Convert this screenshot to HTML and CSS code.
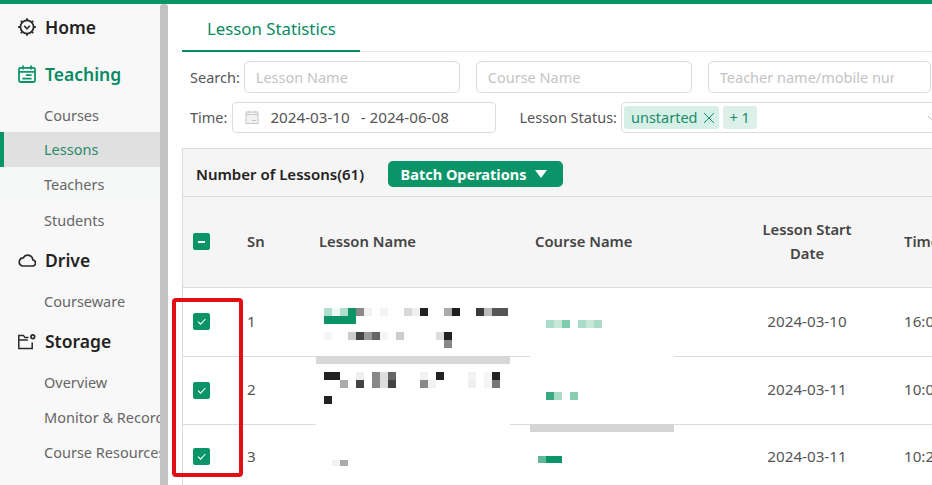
FILE: index.html
```html
<!DOCTYPE html>
<html lang="en">
<head>
<meta charset="utf-8">
<title>Lesson Statistics</title>
<link rel="stylesheet" href="styles.css">
</head>
<body>
<div class="topbar"></div>
<div class="app">
  <aside class="sidebar">
    <nav class="nav">
      <a class="group group-home">
        <svg class="icon" viewBox="0 0 18 18" fill="none" stroke="#2b2b2b" stroke-width="1.8"><circle cx="9" cy="9" r="6.6"/><path d="M9 .2v2M9 15.8v2M.2 9h2M15.8 9h2M2.8 2.8l1.4 1.4M13.8 13.8l1.4 1.4M15.2 2.8l-1.4 1.4M4.2 13.8l-1.4 1.4"/><path d="M6.2 7.8 9 10.8l2.8-3" stroke-width="1.6"/></svg>
        Home
      </a>
      <a class="group group-active group-teaching">
        <svg class="icon" viewBox="0 0 18 18" fill="none" stroke="#0a9468" stroke-width="1.8"><rect x="1" y="2.8" width="16" height="14.2" rx="1.4"/><path d="M5 .4v4M13 .4v4M1 6.8h16M8 10.2h5.6M4.4 13.6h9.2"/></svg>
        Teaching
      </a>
      <a class="item">Courses</a>
      <a class="item item-active">Lessons</a>
      <a class="item item-hover">Teachers</a>
      <a class="item">Students</a>
      <a class="group group-drive">
        <svg class="icon" viewBox="0 0 18 18" fill="none" stroke="#2b2b2b" stroke-width="1.7"><path d="M4.2 15h10a3 3 0 0 0 .6-6 5 5 0 0 0-9.4-2.2A4.2 4.2 0 0 0 4.2 15Z" stroke-linejoin="round"/></svg>
        Drive
      </a>
      <a class="item">Courseware</a>
      <a class="group group-storage">
        <svg class="icon" viewBox="0 0 18 18" fill="none" stroke="#2b2b2b" stroke-width="1.5"><path d="M10.5 5.6H7L5.4 3.4H.8v13h13.4v-6M.8 8h9"/><circle cx="14.8" cy="4.8" r="2.7" fill="#2b2b2b" stroke="none"/><circle cx="14.8" cy="4.8" r="1" fill="#f8f8f8" stroke="none"/></svg>
        Storage
      </a>
      <a class="item">Overview</a>
      <a class="item">Monitor &amp; Recording</a>
      <a class="item">Course Resources</a>
    </nav>
    <div class="scrollbar"></div>
  </aside>
  <main class="main">
    <div class="tabs"><div class="tab">Lesson Statistics</div></div>
    <div class="filters">
      <div class="filter-row">
        <label class="label">Search:</label>
        <input class="input input-lesson" placeholder="Lesson Name">
        <input class="input input-course" placeholder="Course Name">
        <input class="input input-teacher" placeholder="Teacher name/mobile number">
      </div>
      <div class="filter-row filter-row-2">
        <label class="label">Time:</label>
        <div class="range">
          <svg class="range-icon" viewBox="0 0 14 14" fill="none" stroke="#c8c8c8" stroke-width="1"><rect x="1" y="2" width="12" height="11.5" fill="#f2f2f2"/><path d="M4 .5v2.5M10 .5v2.5M1 4.5h12M7 10.5h4"/></svg>
          <span>2024-03-10</span><span class="range-sep">- 2024-06-08</span>
        </div>
        <label class="label label-status">Lesson Status:</label>
        <div class="select">
          <span class="tag">unstarted
            <svg class="tag-x" viewBox="0 0 12 12" fill="none" stroke="#0a9468" stroke-width="1"><path d="M1 1l10 10M11 1 1 11"/></svg>
          </span>
          <span class="tag tag-more">+ 1</span>
          <svg class="select-arrow" viewBox="0 0 10 6" fill="none" stroke="#c0c0c0" stroke-width="1"><path d="M1 1l4 4 4-4"/></svg>
        </div>
      </div>
    </div>
    <section class="panel">
      <div class="toolbar">
        <strong class="count">Number of Lessons(61)</strong>
        <button class="batch">Batch Operations <span class="caret"></span></button>
      </div>
      <table class="table">
        <colgroup><col class="c-check"><col class="c-sn"><col class="c-lesson"><col class="c-course"><col class="c-date"><col class="c-time"></colgroup>
        <thead>
          <tr>
            <th><span class="check check-head"><span class="minus"></span></span></th>
            <th>Sn</th>
            <th>Lesson Name</th>
            <th>Course Name</th>
            <th class="center">Lesson Start<br>Date</th>
            <th class="last">Time</th>
          </tr>
        </thead>
        <tbody>
          <tr class="row1">
            <td><span class="check"><svg viewBox="0 0 17 17" fill="none" stroke="#fff" stroke-width="1.1"><path d="M5 8.6l2.6 2.6L12.4 6"/></svg></span></td>
            <td>1</td><td></td><td></td><td class="center">2024-03-10</td><td class="last">16:00</td>
          </tr>
          <tr class="row2">
            <td><span class="check"><svg viewBox="0 0 17 17" fill="none" stroke="#fff" stroke-width="1.1"><path d="M5 8.6l2.6 2.6L12.4 6"/></svg></span></td>
            <td>2</td><td></td><td></td><td class="center">2024-03-11</td><td class="last">10:00</td>
          </tr>
          <tr class="row3">
            <td><span class="check"><svg viewBox="0 0 17 17" fill="none" stroke="#fff" stroke-width="1.1"><path d="M5 8.6l2.6 2.6L12.4 6"/></svg></span></td>
            <td>3</td><td></td><td></td><td class="center">2024-03-11</td><td class="last">10:20</td>
          </tr>
        </tbody>
      </table>
      <svg class="redact" width="750" height="337" viewBox="182 148 750 337" shape-rendering="crispEdges">
        <g fill="#fff"><rect x="316" y="288" width="194" height="197"/><rect x="510" y="289" width="20" height="66"/><rect x="530" y="288" width="144" height="197"/></g>
        <rect x="316" y="356" width="194" height="8" fill="#d8d8d8"/>
        <rect x="530" y="424" width="144" height="8" fill="#d4d4d4"/>
        <rect x="510" y="356" width="20" height="1" fill="#dcdcdc"/>
        <rect x="510" y="424" width="20" height="1" fill="#dcdcdc"/>
        <g>
          <rect x="324" y="308" width="8" height="8" fill="#b0e0cc"/><rect x="332" y="308" width="8" height="8" fill="#eef8f4"/><rect x="340" y="308" width="8" height="8" fill="#b0dfcc"/><rect x="348" y="308" width="8" height="8" fill="#0a9468"/><rect x="356" y="308" width="8" height="8" fill="#888"/><rect x="364" y="308" width="8" height="8" fill="#f2f2f2"/><rect x="380" y="308" width="8" height="8" fill="#f4f4f4"/><rect x="404" y="308" width="8" height="8" fill="#d8d8d8"/><rect x="412" y="308" width="8" height="8" fill="#eee"/><rect x="420" y="308" width="8" height="8" fill="#222"/><rect x="444" y="308" width="8" height="8" fill="#aaa"/><rect x="452" y="308" width="8" height="8" fill="#1e1e1e"/><rect x="476" y="308" width="8" height="8" fill="#3a3a3a"/><rect x="484" y="308" width="8" height="8" fill="#bbb"/><rect x="492" y="308" width="16" height="8" fill="#555"/>
          <rect x="324" y="316" width="32" height="8" fill="#0a9468"/>
          <rect x="324" y="332" width="8" height="8" fill="#f5f5f5"/><rect x="348" y="332" width="8" height="8" fill="#ccc"/><rect x="356" y="332" width="8" height="8" fill="#444"/><rect x="364" y="332" width="8" height="8" fill="#999"/><rect x="372" y="332" width="8" height="8" fill="#666"/><rect x="380" y="332" width="8" height="8" fill="#f5f5f5"/><rect x="396" y="332" width="8" height="8" fill="#ccc"/><rect x="436" y="332" width="8" height="8" fill="#ddd"/><rect x="444" y="332" width="8" height="8" fill="#222"/>
          <rect x="444" y="340" width="8" height="8" fill="#888"/>
          <rect x="324" y="372" width="16" height="8" fill="#222"/><rect x="356" y="372" width="8" height="8" fill="#eee"/><rect x="372" y="372" width="8" height="8" fill="#888"/><rect x="380" y="372" width="8" height="8" fill="#ddd"/><rect x="388" y="372" width="8" height="8" fill="#666"/><rect x="420" y="372" width="8" height="8" fill="#f2f2f2"/><rect x="436" y="372" width="8" height="8" fill="#222"/><rect x="468" y="372" width="8" height="8" fill="#f2f2f2"/><rect x="484" y="372" width="8" height="8" fill="#f5f5f5"/><rect x="492" y="372" width="8" height="8" fill="#222"/>
          <rect x="340" y="380" width="8" height="8" fill="#aaa"/><rect x="356" y="380" width="8" height="8" fill="#444"/><rect x="372" y="380" width="8" height="8" fill="#888"/><rect x="380" y="380" width="8" height="8" fill="#ddd"/><rect x="388" y="380" width="8" height="8" fill="#444"/><rect x="420" y="380" width="8" height="8" fill="#888"/><rect x="428" y="380" width="8" height="8" fill="#f2f2f2"/><rect x="468" y="380" width="8" height="8" fill="#eee"/><rect x="484" y="380" width="8" height="8" fill="#f4f4f4"/><rect x="492" y="380" width="8" height="8" fill="#777"/>
          <rect x="324" y="396" width="8" height="8" fill="#222"/>
          <rect x="332" y="460" width="8" height="6" fill="#f2f2f2"/><rect x="340" y="460" width="8" height="6" fill="#aaa"/>
          <rect x="546" y="320" width="8" height="8" fill="#a8dcc8"/><rect x="554" y="320" width="8" height="8" fill="#c8e8dc"/><rect x="562" y="320" width="8" height="8" fill="#80ccb0"/><rect x="578" y="320" width="8" height="8" fill="#a8dcc8"/><rect x="586" y="320" width="8" height="8" fill="#c8e8dc"/><rect x="594" y="320" width="8" height="8" fill="#a8dcc8"/>
          <rect x="546" y="392" width="8" height="8" fill="#3aa880"/><rect x="554" y="392" width="8" height="8" fill="#a8dcc8"/><rect x="570" y="392" width="8" height="8" fill="#88ccb0"/>
          <rect x="538" y="456" width="8" height="7" fill="#60b898"/><rect x="546" y="456" width="16" height="7" fill="#0a9468"/>
        </g>
      </svg>
      <div class="highlight"></div>
    </section>
  </main>
</div>
</body>
</html>
```
FILE: styles.css
```css
* { box-sizing: border-box; }
html, body { margin: 0; height: 100%; overflow: hidden; }
body { font-family: "Noto Sans", "Open Sans", sans-serif; font-size: 14.5px; color: #555; background: #fff; }

.topbar { height: 4px; background: #0a9468; }
.app { display: flex; height: 481px; }

.sidebar { width: 168px; flex: none; display: flex; background: #fff; }
.nav { width: 160px; background: #f8f8f8; overflow: hidden; padding-top: 5px; display: flex; flex-direction: column; }
.scrollbar { width: 8px; background: #c2c2c2; border-radius: 3px 3px 0 0; }

.group { display: flex; align-items: center; gap: 9px; padding-left: 18px; font-size: 17.5px; font-weight: 600; color: #222; white-space: nowrap; flex: none; }
.group-home { height: 35px; }
.group-teaching { height: 35px; margin-top: 12px; margin-bottom: 6px; }
.group-drive { height: 35px; margin-top: 5px; margin-bottom: 6px; }
.group-storage { height: 35px; margin-top: 5px; margin-bottom: 6px; }
.group-active { color: #0a8a62; }
.icon { width: 18px; height: 18px; flex: none; }

.item { display: flex; align-items: center; height: 35px; padding-left: 44px; color: #666; white-space: nowrap; flex: none; }
.item-active { background: #e0e0e0; color: #2a8a6a; padding-left: 40px; padding-bottom: 2px; border-left: 4px solid #0a9468; }
.item-hover { background: #f6f8f8; padding-bottom: 2px; }

.main { flex: 1; min-width: 0; padding-left: 14px; position: relative; }

.tabs { height: 48px; border-bottom: 1px solid #e8e8e8; display: flex; }
.tab { width: 178px; height: 48px; border-bottom: 2px solid #0a8a62; color: #0a8a62; font-size: 16.8px; line-height: 50px; padding-left: 25px; white-space: nowrap; }

.filters { padding-top: 9px; }
.filter-row { display: flex; align-items: center; height: 32px; padding-left: 8px; white-space: nowrap; }
.filter-row-2 { margin-top: 9px; height: 31px; }
.label { color: #555; }
.filter-row-2 .label { padding-bottom: 2px; }
.input { height: 32px; border: 1px solid #dcdcdc; border-radius: 5px; padding: 0 11px; font: inherit; color: #555; background: #fff; flex: none; outline: none; }
.input::placeholder { color: #c4c4c4; opacity: 1; }
.input-lesson { width: 216px; margin-left: 4px; }
.input-course { width: 216px; margin-left: 16px; }
.input-teacher { width: 223px; margin-left: 16px; padding-right: 36px; }

.range { width: 264px; height: 31px; margin-left: 5px; border: 1px solid #dcdcdc; border-radius: 4px; display: flex; align-items: center; padding: 0 0 2px 12px; color: #555; flex: none; font-size: 15.2px; }
.range-icon { width: 14px; height: 14px; margin-right: 11px; flex: none; }
.range-sep { margin-left: 11px; }
.label-status { margin-left: 23px; }
.select { width: 320px; height: 31px; margin-left: 4px; border: 1px solid #dcdcdc; border-radius: 5px; display: flex; align-items: center; gap: 4px; padding-left: 2px; flex: none; }
.tag { height: 23px; background: #d6f0e8; color: #1a8c68; border-radius: 3px; padding: 0 4px 2px 7px; display: flex; align-items: center; gap: 5px; }
.tag-more { background: #dcefe9; padding-right: 7px; }
.tag-x { width: 12px; height: 12px; margin-top: 2px; }
.select-arrow { width: 10px; height: 6px; margin-left: auto; margin-right: 3px; }

.panel { position: absolute; left: 14px; top: 144px; width: 760px; height: 337px; border: 1px solid #dcdcdc; border-bottom: none; border-right: none; }
.toolbar { height: 48px; background: #f5f5f5; display: flex; align-items: center; padding: 2px 0 0 13px; border-bottom: 1px solid #dcdcdc; }
.count { color: #222; font-weight: 600; font-size: 15px; white-space: nowrap; }
.batch { margin-left: 24px; height: 26px; width: 175px; padding: 0 3px 0 0; border: none; border-radius: 5px; background: #0a9468; color: #fff; font: inherit; font-weight: 700; display: flex; align-items: center; justify-content: center; gap: 9px; white-space: nowrap; }
.caret { width: 0; height: 0; border-left: 6.5px solid transparent; border-right: 6.5px solid transparent; border-top: 8px solid #fff; }

.table { border-collapse: collapse; table-layout: fixed; width: 750px; }
.c-check { width: 54px; }
.c-sn { width: 72px; }
.c-lesson { width: 216px; }
.c-course { width: 215px; }
.c-date { width: 134px; }
.c-time { width: 59px; }
.table th { height: 90px; background: #f5f5f5; text-align: left; padding: 0 0 2px 10px; color: #444; font-size: 14.8px; font-weight: 600; line-height: 24px; border-bottom: 1px solid #dcdcdc; white-space: nowrap; overflow: hidden; }
.table td { height: 68px; padding: 0 0 2px 10px; color: #555; font-size: 15.2px; border-bottom: 1px solid #dcdcdc; white-space: nowrap; overflow: hidden; }
.table .row1 td { height: 69px; }
.table .row3 td { height: 65px; }
.table th.center, .table td.center { text-align: center; padding: 0 0 2px; }
.table th.last, .table td.last { padding-left: 30px; }
.check { display: block; width: 17px; height: 17px; background: #0a9468; border-radius: 2px; position: relative; top: 1px; }
.check-head { top: 1px; }
.check svg { display: block; width: 17px; height: 17px; }
.minus { position: absolute; left: 5px; top: 8px; width: 7px; height: 1.5px; background: #fff; }

.redact { position: absolute; left: -1px; top: -1px; display: block; }
.highlight { position: absolute; left: -11px; top: 149px; width: 71px; height: 179px; border: 4px solid #e30e14; border-radius: 4px; }
```
